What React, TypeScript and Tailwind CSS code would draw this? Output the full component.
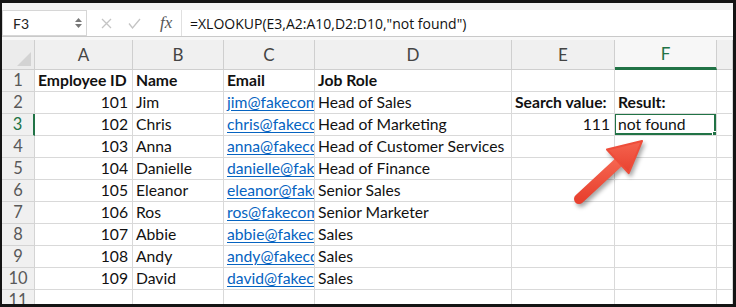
import * as React from 'react'

const cols = ['A', 'B', 'C', 'D', 'E', 'F', '']

type Row = {
  id?: string
  name?: string
  email?: string
  role?: string
  e?: string
  f?: string
  bold?: boolean
}

const rows: Row[] = [
  { id: 'Employee ID', name: 'Name', email: 'Email', role: 'Job Role', bold: true },
  { id: '101', name: 'Jim', email: 'jim@fakecompany.com', role: 'Head of Sales', e: 'Search value:', f: 'Result:' },
  { id: '102', name: 'Chris', email: 'chris@fakecompany.com', role: 'Head of Marketing', e: '111', f: 'not found' },
  { id: '103', name: 'Anna', email: 'anna@fakecompany.com', role: 'Head of Customer Services' },
  { id: '104', name: 'Danielle', email: 'danielle@fakecompany.com', role: 'Head of Finance' },
  { id: '105', name: 'Eleanor', email: 'eleanor@fakecompany.com', role: 'Senior Sales' },
  { id: '106', name: 'Ros', email: 'ros@fakecompany.com', role: 'Senior Marketer' },
  { id: '107', name: 'Abbie', email: 'abbie@fakecompany.com', role: 'Sales' },
  { id: '108', name: 'Andy', email: 'andy@fakecompany.com', role: 'Sales' },
  { id: '109', name: 'David', email: 'david@fakecompany.com', role: 'Sales' },
  {},
]

const cell = 'border-r border-b border-[#d9d9d9] overflow-hidden whitespace-nowrap px-[3px] flex items-center'

function Arrow() {
  return (
    <svg
      className="absolute left-[558px] top-[90px] drop-shadow-[2px_3px_2px_rgba(0,0,0,0.35)]"
      width="95"
      height="85"
      viewBox="0 0 95 85"
    >
      <defs>
        <linearGradient id="ar" x1="0" y1="0" x2="0" y2="1">
          <stop offset="0" stopColor="#f5644f" />
          <stop offset="1" stopColor="#e8412f" />
        </linearGradient>
      </defs>
      <line x1="19" y1="69" x2="60" y2="31" stroke="url(#ar)" strokeWidth="10" strokeLinecap="round" />
      <polygon points="82,11 47,19.5 68.7,43.1" fill="url(#ar)" strokeLinejoin="round" stroke="#ee4d3a" strokeWidth="2" />
    </svg>
  )
}

export default function App() {
  return (
    <div
      className="w-[736px] h-[307px] overflow-hidden bg-white border-t-[3px] border-l-2 border-r-[3px] border-b-[3px] border-[#141414] flex flex-col text-[#111]"
      style={{ fontFamily: 'Lato, "Open Sans", sans-serif' }}
    >
      <div className="h-[7px] bg-[#f3f3f3] shrink-0" />

      <div className="h-[27px] shrink-0 flex items-stretch bg-white border-b border-[#c9c9c9]">
        <div className="w-[85px] flex items-center justify-between pl-[10px] pr-[4px] border border-[#d6d6d6] text-[14px] text-[#222]">
          <span>F3</span>
          <div className="flex flex-col items-center gap-[2px] text-[#777]">
            <svg width="7" height="4" viewBox="0 0 7 4"><polygon points="3.5,0 7,4 0,4" fill="currentColor" /></svg>
            <svg width="7" height="4" viewBox="0 0 7 4"><polygon points="0,0 7,0 3.5,4" fill="currentColor" /></svg>
          </div>
        </div>
        <div className="flex items-center w-[95px] shrink-0 text-[#c4c4c4] border-r border-[#e0e0e0]">
          <svg className="ml-[14px]" width="11" height="11" viewBox="0 0 11 11">
            <path d="M1 1L10 10M10 1L1 10" stroke="currentColor" strokeWidth="1.3" />
          </svg>
          <svg className="ml-[16px]" width="13" height="11" viewBox="0 0 13 11">
            <path d="M1 5.5L4.5 10L12 1" stroke="currentColor" strokeWidth="1.3" fill="none" />
          </svg>
          <span
            className="ml-[19px] text-[17px] italic text-[#555]"
            style={{ fontFamily: '"Liberation Serif", serif' }}
          >
            fx
          </span>
        </div>
        <div
          className="flex items-center pl-[8px] text-[14px] text-[#111]"
          style={{ fontFamily: '"Open Sans", sans-serif' }}
        >
          =XLOOKUP(E3,A2:A10,D2:D10,"not found")
        </div>
      </div>

      <div className="h-[3px] shrink-0 bg-[#f7f7f7]" />

      <div className="relative grid grid-cols-[33px_98px_91px_91px_197px_103px_102px_1fr] grid-rows-[30px] auto-rows-[22px] text-[15.7px]">
        <div className="border-r border-b border-[#cfcfcf] bg-[#ececec] relative overflow-hidden">
          <svg className="absolute right-[3px] bottom-[3px]" width="14" height="14" viewBox="0 0 14 14">
            <polygon points="14,0 14,14 0,14" fill="#d3d3d3" />
          </svg>
        </div>
        {cols.map((c, i) => (
          <div
            key={i}
            className={
              c === 'F'
                ? 'flex items-center justify-center bg-[#f7f7f7] border-r border-[#cfcfcf] border-b-[3px] border-b-[#217346] text-[#217346] text-[17px]'
                : 'flex items-center justify-center bg-[#f0f0f0] border-r border-b border-[#cfcfcf] text-[#444] text-[17px]'
            }
          >
            {c}
          </div>
        ))}

        {rows.map((r, i) => {
          const n = i + 1
          const sel = n === 3
          return (
            <React.Fragment key={n}>
              <div
                className={
                  sel
                    ? 'flex items-center justify-center bg-[#f0f0f0] border-b border-[#d9d9d9] border-r-2 border-r-[#217346] text-[#217346] text-[16.5px]'
                    : 'flex items-center justify-center bg-[#f0f0f0] border-r border-b border-[#d4d4d4] text-[#595959] text-[16.5px]'
                }
              >
                {n}
              </div>
              <div className={`${cell} ${r.bold ? 'font-bold justify-start' : 'justify-end pr-[4px]'}`}>{r.id}</div>
              <div className={`${cell} ${r.bold ? 'font-bold' : ''}`}>{r.name}</div>
              <div className={cell}>
                {r.bold ? (
                  <span className="font-bold">{r.email}</span>
                ) : (
                  <span className="text-[#0563c1] underline underline-offset-2">{r.email}</span>
                )}
              </div>
              <div className={`${cell} ${r.bold ? 'font-bold' : ''}`}>{r.role}</div>
              <div className={`${cell} ${n === 2 ? 'font-bold' : 'justify-end pr-[4px]'}`}>{r.e}</div>
              <div className={`${cell} relative ${n === 2 ? 'font-bold' : ''}`}>
                {r.f}
                {sel && (
                  <div className="absolute -left-[1px] -top-[1px] right-0 bottom-0 border-2 border-[#217346]">
                    <div className="absolute -right-[4px] -bottom-[4px] w-[6px] h-[6px] bg-[#217346] border border-white" />
                  </div>
                )}
              </div>
              <div className={cell} />
            </React.Fragment>
          )
        })}
        <Arrow />
      </div>
    </div>
  )
}
